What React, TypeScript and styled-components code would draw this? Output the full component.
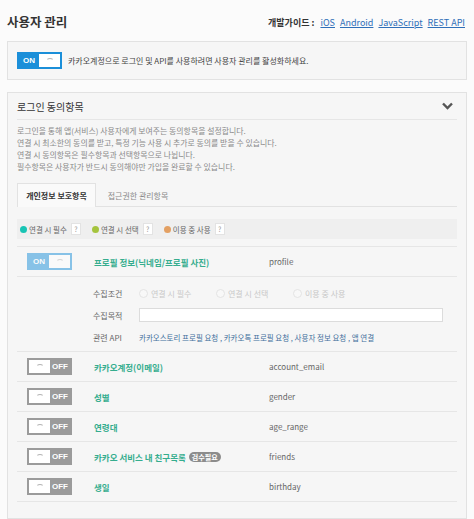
import styled, { createGlobalStyle } from "styled-components";

const GlobalStyle = createGlobalStyle`
  body {
    margin: 0;
    background: #fbfbfb;
    font-family: "Noto Sans CJK KR", "Noto Sans", sans-serif;
    color: #333;
  }
`;

const Page = styled.div`
  padding: 0 7px;
  width: 474px;
  box-sizing: border-box;
`;

const Header = styled.div`
  height: 41px;
  display: flex;
  align-items: center;
  justify-content: space-between;
`;

const Title = styled.h1`
  margin: 2px 0 0 0;
  font-size: 12.5px;
  font-weight: 700;
  color: #333;
`;

const Guide = styled.div`
  display: flex;
  align-items: center;
  gap: 5px;
  font-size: 9px;
  margin-right: 2px;
  margin-top: 4px;
`;

const GuideLabel = styled.span`
  font-weight: 700;
  color: #333;
  margin-right: 1px;
`;

const GuideLink = styled.a`
  color: #2f6fb8;
  text-decoration: underline;
  cursor: pointer;
`;

const ActivationBox = styled.div`
  height: 39px;
  box-sizing: border-box;
  border: 1px solid #e2e2e2;
  background: #f6f6f6;
  display: flex;
  align-items: center;
  gap: 6px;
  padding: 0 9px;
  font-size: 8px;
  color: #444;
`;

const Toggle = styled.div<{ $on: boolean; $dim?: boolean }>`
  width: 45px;
  height: 17px;
  box-sizing: border-box;
  padding: 2px;
  display: flex;
  flex-direction: ${(p) => (p.$on ? "row" : "row-reverse")};
  align-items: center;
  justify-content: space-between;
  background: ${(p) => (p.$on ? "#1b8fd9" : "#9b9b9b")};
  opacity: ${(p) => (p.$dim ? 0.5 : 1)};
  flex-shrink: 0;
`;

const ToggleText = styled.span`
  color: #fff;
  font-size: 8px;
  font-weight: 700;
  width: 20px;
  text-align: center;
  font-family: "Liberation Sans", sans-serif;
`;

const Knob = styled.span`
  width: 21px;
  height: 13px;
  background: #fff;
  display: flex;
  align-items: center;
  justify-content: center;
  &::after {
    content: "";
    width: 6px;
    height: 6px;
    margin-top: 3px;
    border: 1px solid transparent;
    border-top-color: #b5b5b5;
    border-radius: 50%;
  }
`;

const Panel = styled.div`
  margin-top: 12px;
  border: 1px solid #e2e2e2;
  background: #f6f6f6;
  padding: 0 9px 16px;
`;

const PanelHeader = styled.div`
  height: 26px;
  display: flex;
  align-items: center;
  justify-content: space-between;
  border-bottom: 1px solid #e6e6e6;
  font-size: 10px;
  color: #333;
  padding-right: 4px;
`;

const Description = styled.p`
  margin: 5px 0 0;
  font-size: 7.9px;
  line-height: 12px;
  color: #8a8a8a;
`;

const Tabs = styled.div`
  margin-top: 10px;
  height: 23px;
  display: flex;
  border-bottom: 1px solid #e2e2e2;
`;

const Tab = styled.div<{ $active?: boolean }>`
  width: ${(p) => (p.$active ? "79px" : "84px")};
  height: 24px;
  box-sizing: border-box;
  display: flex;
  align-items: center;
  justify-content: center;
  font-size: 8px;
  font-weight: ${(p) => (p.$active ? 700 : 400)};
  color: ${(p) => (p.$active ? "#333" : "#888")};
  background: ${(p) => (p.$active ? "#fafafa" : "transparent")};
  border: 1px solid ${(p) => (p.$active ? "#e2e2e2" : "transparent")};
  border-bottom: none;
`;

const Legend = styled.div`
  margin-top: 12px;
  height: 20px;
  background: #efefef;
  display: flex;
  align-items: center;
  padding-left: 3px;
  gap: 11px;
  font-size: 7.5px;
  color: #666;
`;

const LegendItem = styled.div`
  display: flex;
  align-items: center;
  gap: 2px;
`;

const Dot = styled.span<{ $color: string }>`
  width: 7px;
  height: 7px;
  border-radius: 50%;
  background: ${(p) => p.$color};
`;

const Help = styled.span`
  width: 8px;
  height: 10px;
  border: 1px solid #e3e3e3;
  background: #fff;
  font-size: 7px;
  color: #999;
  display: flex;
  align-items: center;
  justify-content: center;
  margin-left: 2px;
`;

const Table = styled.div`
  margin-top: 7px;
  border-top: 1px solid #e6e6e6;
`;

const Row = styled.div`
  height: 29px;
  display: flex;
  align-items: center;
  border-bottom: 1px solid #e6e6e6;
  padding-left: 10px;
`;

const Name = styled.div`
  width: 175px;
  margin-left: 22px;
  display: flex;
  align-items: center;
  gap: 3px;
  font-size: 8.5px;
  font-weight: 700;
  color: #35ad8e;
`;

const Badge = styled.span`
  background: #8c8c8c;
  color: #fff;
  font-size: 7px;
  border-radius: 6px;
  padding: 0 3px;
  line-height: 10px;
`;

const Key = styled.div`
  font-size: 8px;
  color: #666;
`;

const Details = styled.div`
  padding: 5px 0 3px 76px;
  border-bottom: 1px solid #e6e6e6;
  display: flex;
  flex-direction: column;
`;

const DetailRow = styled.div`
  display: flex;
  align-items: center;
  height: 22px;
  font-size: 8px;
`;

const DetailLabel = styled.span`
  width: 46px;
  color: #666;
`;

const Radio = styled.label`
  display: flex;
  align-items: center;
  gap: 3px;
  color: #c8c8c8;
  width: 77px;
  &::before {
    content: "";
    width: 7px;
    height: 7px;
    border: 1px solid #e4e4e4;
    border-radius: 50%;
    background: #f8f8f8;
  }
`;

const PurposeInput = styled.input`
  width: 304px;
  height: 14px;
  box-sizing: border-box;
  border: 1px solid #dcdcdc;
  background: #fff;
  outline: none;
  padding: 0 4px;
`;

const ApiLinks = styled.span`
  color: #3f6f9c;
  font-size: 7.5px;
`;

const items = [
  { name: "카카오계정(이메일)", key: "account_email" },
  { name: "성별", key: "gender" },
  { name: "연령대", key: "age_range" },
  { name: "카카오 서비스 내 친구목록", key: "friends", badge: "검수필요" },
  { name: "생일", key: "birthday" },
];

function Switch({ on, dim }: { on: boolean; dim?: boolean }) {
  return (
    <Toggle $on={on} $dim={dim}>
      <ToggleText>{on ? "ON" : "OFF"}</ToggleText>
      <Knob />
    </Toggle>
  );
}

export default function App() {
  return (
    <Page>
      <GlobalStyle />
      <Header>
        <Title>사용자 관리</Title>
        <Guide>
          <GuideLabel>개발가이드 :</GuideLabel>
          <GuideLink>iOS</GuideLink>
          <GuideLink>Android</GuideLink>
          <GuideLink>JavaScript</GuideLink>
          <GuideLink>REST API</GuideLink>
        </Guide>
      </Header>
      <ActivationBox>
        <Switch on />
        카카오계정으로 로그인 및 API를 사용하려면 사용자 관리를 활성화하세요.
      </ActivationBox>
      <Panel>
        <PanelHeader>
          로그인 동의항목
          <svg width="11" height="8" viewBox="0 0 11 8">
            <path d="M1 1.5 L5.5 6 L10 1.5" fill="none" stroke="#555" strokeWidth="2.4" />
          </svg>
        </PanelHeader>
        <Description>
          로그인을 통해 앱(서비스) 사용자에게 보여주는 동의항목을 설정합니다.
          <br />
          연결 시 최소한의 동의를 받고, 특정 기능 사용 시 추가로 동의를 받을 수 있습니다.
          <br />
          연결 시 동의항목은 필수항목과 선택항목으로 나뉩니다.
          <br />
          필수항목은 사용자가 반드시 동의해야만 가입을 완료할 수 있습니다.
        </Description>
        <Tabs>
          <Tab $active>개인정보 보호항목</Tab>
          <Tab>접근권한 관리항목</Tab>
        </Tabs>
        <Legend>
          <LegendItem>
            <Dot $color="#18c4b4" />
            연결 시 필수<Help>?</Help>
          </LegendItem>
          <LegendItem>
            <Dot $color="#a5c43e" />
            연결 시 선택<Help>?</Help>
          </LegendItem>
          <LegendItem>
            <Dot $color="#e3a063" />
            이용 중 사용<Help>?</Help>
          </LegendItem>
        </Legend>
        <Table>
          <Row>
            <Switch on dim />
            <Name>프로필 정보(닉네임/프로필 사진)</Name>
            <Key>profile</Key>
          </Row>
          <Details>
            <DetailRow>
              <DetailLabel>수집조건</DetailLabel>
              <Radio>연결 시 필수</Radio>
              <Radio>연결 시 선택</Radio>
              <Radio>이용 중 사용</Radio>
            </DetailRow>
            <DetailRow>
              <DetailLabel>수집목적</DetailLabel>
              <PurposeInput />
            </DetailRow>
            <DetailRow>
              <DetailLabel>관련 API</DetailLabel>
              <ApiLinks>
                카카오스토리 프로필 요청 , 카카오톡 프로필 요청 , 사용자 정보 요청 , 앱 연결
              </ApiLinks>
            </DetailRow>
          </Details>
          {items.map((item) => (
            <Row key={item.key}>
              <Switch on={false} />
              <Name>
                {item.name}
                {item.badge && <Badge>{item.badge}</Badge>}
              </Name>
              <Key>{item.key}</Key>
            </Row>
          ))}
        </Table>
      </Panel>
    </Page>
  );
}
